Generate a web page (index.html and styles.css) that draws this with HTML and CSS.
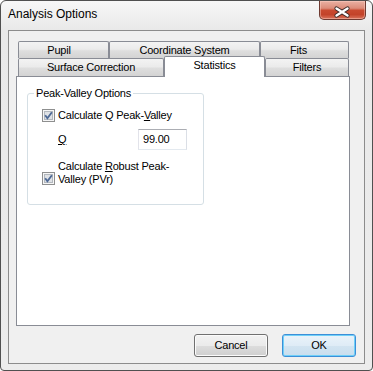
FILE: index.html
```html
<!DOCTYPE html>
<html>
<head>
<meta charset="utf-8">
<title>Analysis Options</title>
<link rel="stylesheet" href="styles.css">
</head>
<body>
<div class="window">
  <div class="titlebar">
    <span class="title">Analysis Options</span>
    <div class="close">
      <svg width="45" height="18" viewBox="0 0 45 18">
        <path d="M16.5 7.5 L27.5 14.5 M27.5 7.5 L16.5 14.5" stroke="#3a2a28" stroke-width="4.2" stroke-linecap="round" fill="none"/>
        <path d="M16.5 7.5 L27.5 14.5 M27.5 7.5 L16.5 14.5" stroke="#ffffff" stroke-width="2.4" stroke-linecap="round" fill="none"/>
      </svg>
    </div>
  </div>
  <div class="client">
    <div class="tabctl">
      <div class="tabrow row1">
        <div class="tab t-pupil">Pupil</div>
        <div class="tab t-coord">Coordinate System</div>
        <div class="tab t-fits">Fits</div>
      </div>
      <div class="tabrow row2">
        <div class="tab t-surf">Surface Correction</div>
        <div class="tab sel t-stat">Statistics</div>
        <div class="tab t-filt">Filters</div>
      </div>
      <div class="panel">
        <div class="group">
          <div class="legend"><span>Peak-Valley Options</span></div>
          <div class="cbrow first">
            <svg class="cb" width="13" height="13" viewBox="0 0 13 13">
              <rect x="0.5" y="0.5" width="12" height="12" fill="#f6f6f6" stroke="#8e8f8f"/>
              <rect x="2.5" y="2.5" width="8" height="8" fill="#dfe2e6" stroke="#b3b8be"/>
              <path d="M3.2 6.3 L5.4 9.2 L9.9 3.2" stroke="#4f6a96" stroke-width="1.9" fill="none"/>
            </svg>
            <span class="cblabel">Calculate Q Peak-<u>V</u>alley</span>
          </div>
          <div class="qrow">
            <span class="qlabel"><u>Q</u></span>
            <div class="textbox">99.00</div>
          </div>
          <div class="cbrow second">
            <svg class="cb cb2" width="13" height="13" viewBox="0 0 13 13">
              <rect x="0.5" y="0.5" width="12" height="12" fill="#f6f6f6" stroke="#8e8f8f"/>
              <rect x="2.5" y="2.5" width="8" height="8" fill="#dfe2e6" stroke="#b3b8be"/>
              <path d="M3.2 6.3 L5.4 9.2 L9.9 3.2" stroke="#4f6a96" stroke-width="1.9" fill="none"/>
            </svg>
            <div class="cblabel multi">
              <div class="line">Calculate <u>R</u>obust Peak-</div>
              <div class="line">Valley (PVr)</div>
            </div>
          </div>
        </div>
      </div>
    </div>
    <div class="buttons">
      <div class="btn">Cancel</div>
      <div class="btn default">OK</div>
    </div>
  </div>
</div>
</body>
</html>
```
FILE: styles.css
```css
html, body {
  margin: 0;
  padding: 0;
  background: #ffffff;
}

body {
  font-family: "Liberation Sans", Arial, sans-serif;
  font-size: 11px;
  color: #000;
}

.window {
  width: 373px;
  height: 371px;
  box-sizing: border-box;
  border: 1px solid #505050;
  border-radius: 6px 6px 4px 4px;
  background: linear-gradient(#f7f7f7 0px, #e9e9e9 29px, #ececec 100%);
  display: flex;
  flex-direction: column;
  overflow: hidden;
}

.titlebar {
  height: 29px;
  flex: none;
  display: flex;
  justify-content: space-between;
  align-items: flex-start;
}

.title {
  font-size: 12px;
  line-height: 27px;
  padding-left: 7px;
  color: #000;
}

.close {
  width: 47px;
  height: 19px;
  box-sizing: border-box;
  margin-right: 6px;
  border: 1px solid #6e3a31;
  border-top: none;
  border-radius: 0 0 5px 5px;
  background: linear-gradient(#eab1a3 0%, #dc8c7a 40%, #c94a30 52%, #c3432a 75%, #d9735c 100%);
  box-shadow: inset 0 0 0 1px rgba(255, 210, 200, 0.45);
  display: flex;
}

.close svg {
  display: block;
}

.client {
  margin: 0 7px;
  height: 334px;
  box-sizing: border-box;
  border: 1px solid #8c8c8c;
  background: #f0f0f0;
  display: flex;
  flex-direction: column;
}

.tabctl {
  margin: 10px 14px 0 7px;
}

.tabrow {
  display: flex;
  align-items: flex-start;
  padding-left: 2px;
}

.row1 {
  height: 17px;
}

.row2 {
  height: 18px;
}

.tab {
  box-sizing: border-box;
  border: 1px solid #898c95;
  border-bottom: none;
  border-radius: 2px 2px 0 0;
  background: linear-gradient(#f3f3f3 0%, #ebebeb 45%, #dedede 55%, #d3d3d3 100%);
  text-align: center;
  letter-spacing: -0.2px;
  white-space: nowrap;
}

.row1 .tab {
  height: 17px;
  line-height: 16px;
}

.row2 .tab {
  height: 18px;
  line-height: 17px;
}

.t-pupil { width: 91px; padding-right: 9px; }
.t-coord { width: 151px; }
.t-fits { width: 89px; padding-right: 12px; }
.t-surf { width: 146px; }
.t-filt { width: 84px; }

.row2 .tab.sel {
  width: 101px;
  height: 21px;
  margin-top: -2px;
  line-height: 17px;
  background: #ffffff;
  position: relative;
  z-index: 1;
}

.panel {
  height: 250px;
  box-sizing: border-box;
  border: 1px solid #898c95;
  background: #ffffff;
  padding: 16px 0 0 10px;
}

.group {
  width: 177px;
  height: 112px;
  box-sizing: border-box;
  border: 1px solid #d5dfe5;
  border-radius: 3px;
  letter-spacing: -0.2px;
}

.legend {
  margin: -7px 0 0 6px;
  height: 13px;
  line-height: 13px;
}

.legend span {
  background: #ffffff;
  padding: 0 2px;
}

.cbrow {
  display: flex;
  align-items: center;
  padding-left: 14px;
}

.cbrow.first {
  margin-top: 9px;
  height: 13px;
}

.cb {
  display: block;
  flex: none;
}

.cblabel {
  margin-left: 3px;
  line-height: 13px;
}

.qrow {
  display: flex;
  align-items: center;
  margin-top: 7px;
  padding-left: 30px;
}

.qlabel {
  width: 80px;
  line-height: 13px;
}

.textbox {
  width: 49px;
  height: 21px;
  box-sizing: border-box;
  border: 1px solid;
  border-color: #abadb3 #dbdfe6 #e3e9ef #e2e3ea;
  background: #ffffff;
  padding-left: 4px;
  line-height: 19px;
}

.cbrow.second {
  margin-top: 10px;
  align-items: flex-start;
}

.cb2 {
  margin-top: 12px;
}

.multi .line {
  height: 13px;
  line-height: 13px;
  white-space: nowrap;
}

.buttons {
  display: flex;
  justify-content: flex-end;
  gap: 14px;
  margin-top: 8px;
  padding-right: 8px;
}

.btn {
  width: 74px;
  height: 23px;
  box-sizing: border-box;
  border: 1px solid #707070;
  border-radius: 3px;
  background: linear-gradient(#f2f2f2 0%, #ebebeb 50%, #dddddd 51%, #cfcfcf 100%);
  box-shadow: inset 0 0 0 1px #fbfbfb;
  text-align: center;
  line-height: 21px;
  letter-spacing: -0.2px;
}

.btn.default {
  border-color: #3c8fd8;
  background: linear-gradient(#eaf3fa 0%, #dfecf6 50%, #d2e4f1 51%, #c9deee 100%);
  box-shadow: inset 0 0 0 1px #6fd0f8;
}
```
